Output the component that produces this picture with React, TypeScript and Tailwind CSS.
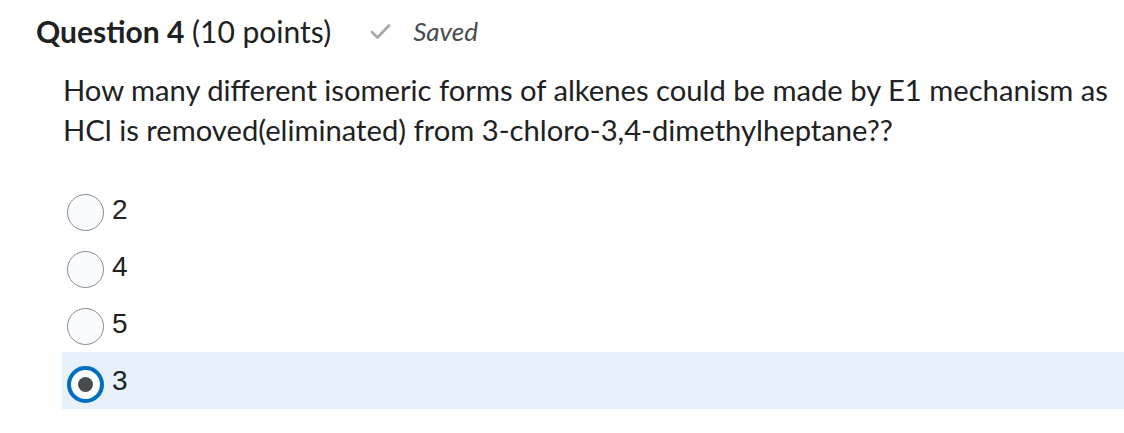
import React from "react";

const options = [
  { label: "2", selected: false },
  { label: "4", selected: false },
  { label: "5", selected: false },
  { label: "3", selected: true },
];

function Radio({ selected }: { selected: boolean }) {
  if (selected) {
    return (
      <span className="mt-2 flex h-[37px] w-[37px] shrink-0 items-center justify-center rounded-full border-[4px] border-[#006fbf] bg-white">
        <span className="h-[15px] w-[15px] rounded-full bg-[#494c4e]" />
      </span>
    );
  }
  return (
    <span className="mt-[6px] block h-[37px] w-[37px] shrink-0 rounded-full border-[1.5px] border-[#868c8f] bg-[#f9fbff]" />
  );
}

export default function App() {
  return (
    <div className="min-h-[433px] w-[1124px] bg-white text-[#202122]" style={{ fontFamily: "Lato, 'Noto Sans', sans-serif" }}>
      <div className="pl-[36px] pt-[13px]">
        <div className="flex h-[36px] items-center">
          <h2 className="text-[30px] leading-[36px]">
            <span className="font-bold">Question 4</span>
            <span className="font-normal"> (10 points)</span>
          </h2>
          <span className="ml-[39px] flex items-center">
            <svg width="21" height="17" viewBox="0 0 21 17" fill="none">
              <path d="M2 9 L7.5 14.5 L19 2.5" stroke="#a5a9ac" strokeWidth="2.8" strokeLinecap="round" strokeLinejoin="round" />
            </svg>
          </span>
          <span className="ml-[22px] text-[26px] leading-[36px] italic text-[#494c4e]">Saved</span>
        </div>
      </div>
      <p className="pl-[63px] pt-[21px] text-[29.2px] leading-[40px]">
        How many different isomeric forms of alkenes could be made by E1 mechanism as
        <br />
        HCl is removed(eliminated) from 3-chloro-3,4-dimethylheptane??
      </p>
      <div className="ml-[62px] mt-[31px] flex flex-col">
        {options.map((o) => (
          <div
            key={o.label}
            className={`flex h-[57px] items-center pl-[5px] ${o.selected ? "bg-[#e7f1fc]" : ""}`}
          >
            <Radio selected={o.selected} />
            <span
              className="ml-[8px] text-[28px] leading-none text-[#202122]"
              style={{ fontFamily: "'Liberation Sans', Arial, sans-serif" }}
            >
              {o.label}
            </span>
          </div>
        ))}
      </div>
    </div>
  );
}
